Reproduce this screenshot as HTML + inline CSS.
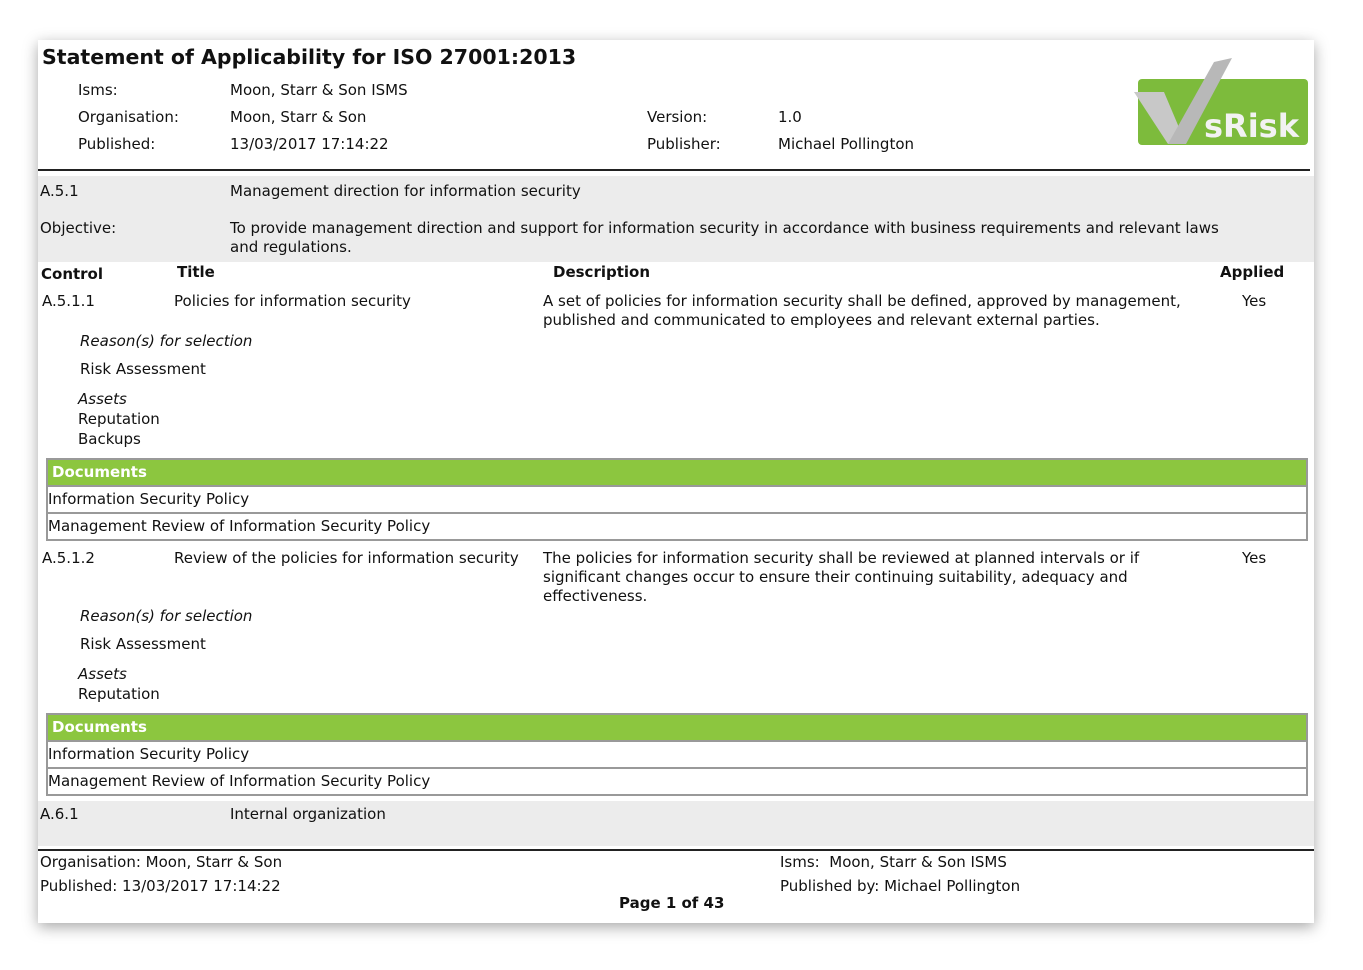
<!DOCTYPE html>
<html><head><meta charset="utf-8"><style>
body{margin:0;background:#fff;width:1363px;height:970px;position:relative;overflow:hidden;font-family:"DejaVu Sans","Liberation Sans",sans-serif;font-size:15px;color:#111}
.pg{position:absolute;left:38px;top:40px;width:1276px;height:883px;background:#fff;box-shadow:0 4px 14px rgba(0,0,0,.35)}
.t{position:absolute;white-space:nowrap}
.b{font-weight:bold}
.i{font-style:italic}
.gray{position:absolute;background:#ececec;left:38px;width:1276px}
.doc{position:absolute;left:46px;width:1262px;border:2px solid #999;box-sizing:border-box;background:#fff}
.dh{background:#8cc63f;color:#fff;font-weight:bold;height:25px;line-height:25px;padding-left:4px}
.dr{height:27px;line-height:24px;border-top:2px solid #999;box-sizing:border-box}
</style></head><body>
<div class="pg"></div>
<div class="t b" style="left:42px;top:45px;font-size:20.5px">Statement of Applicability for ISO 27001:2013</div>
<div class="t" style="left:78px;top:81px">Isms:</div>
<div class="t" style="left:230px;top:81px">Moon, Starr &amp; Son ISMS</div>
<div class="t" style="left:78px;top:108px">Organisation:</div>
<div class="t" style="left:230px;top:108px">Moon, Starr &amp; Son</div>
<div class="t" style="left:647px;top:108px">Version:</div>
<div class="t" style="left:778px;top:108px">1.0</div>
<div class="t" style="left:78px;top:135px">Published:</div>
<div class="t" style="left:230px;top:135px">13/03/2017 17:14:22</div>
<div class="t" style="left:647px;top:135px">Publisher:</div>
<div class="t" style="left:778px;top:135px">Michael Pollington</div>
<svg style="position:absolute;left:1134px;top:56px" width="176" height="92" viewBox="0 0 176 92">
<rect x="4" y="23" width="170" height="66" rx="4" fill="#7dbb3c"/>
<polygon points="0,36 30,36 52,88 34,88" fill="#c8c8c8"/>
<polygon points="34,88 52,88 98,2 80,6" fill="#b8b8b8"/>
<text x="70" y="81" font-family="DejaVu Sans,sans-serif" font-weight="bold" font-size="32" fill="#f2f2f2">sRisk</text>
</svg>
<div style="position:absolute;left:38px;top:169px;width:1272px;height:2px;background:#222"></div>
<div class="gray" style="top:176px;height:86px"></div>
<div class="t" style="left:40px;top:182px">A.5.1</div>
<div class="t" style="left:230px;top:182px">Management direction for information security</div>
<div class="t" style="left:40px;top:219px">Objective:</div>
<div class="t" style="left:230px;top:219px;line-height:19px">To provide management direction and support for information security in accordance with business requirements and relevant laws<br>and regulations.</div>
<div class="t b" style="left:41px;top:265px">Control</div>
<div class="t b" style="left:177px;top:263px">Title</div>
<div class="t b" style="left:553px;top:263px">Description</div>
<div class="t b" style="left:1220px;top:263px">Applied</div>
<div class="t" style="left:42px;top:292px">A.5.1.1</div>
<div class="t" style="left:174px;top:292px">Policies for information security</div>
<div class="t" style="left:543px;top:292px;line-height:19px">A set of policies for information security shall be defined, approved by management,<br>published and communicated to employees and relevant external parties.</div>
<div class="t" style="left:1242px;top:292px">Yes</div>
<div class="t i" style="left:80px;top:332px">Reason(s) for selection</div>
<div class="t" style="left:80px;top:360px">Risk Assessment</div>
<div class="t i" style="left:78px;top:390px">Assets</div>
<div class="t" style="left:78px;top:410px">Reputation</div>
<div class="t" style="left:78px;top:430px">Backups</div>
<div class="doc" style="top:458px"><div class="dh">Documents</div><div class="dr">Information Security Policy</div><div class="dr">Management Review of Information Security Policy</div></div>
<div class="t" style="left:42px;top:549px">A.5.1.2</div>
<div class="t" style="left:174px;top:549px">Review of the policies for information security</div>
<div class="t" style="left:543px;top:549px;line-height:19px">The policies for information security shall be reviewed at planned intervals or if<br>significant changes occur to ensure their continuing suitability, adequacy and<br>effectiveness.</div>
<div class="t" style="left:1242px;top:549px">Yes</div>
<div class="t i" style="left:80px;top:607px">Reason(s) for selection</div>
<div class="t" style="left:80px;top:635px">Risk Assessment</div>
<div class="t i" style="left:78px;top:665px">Assets</div>
<div class="t" style="left:78px;top:685px">Reputation</div>
<div class="doc" style="top:713px"><div class="dh">Documents</div><div class="dr">Information Security Policy</div><div class="dr">Management Review of Information Security Policy</div></div>
<div class="gray" style="top:801px;height:45px"></div>
<div class="t" style="left:40px;top:805px">A.6.1</div>
<div class="t" style="left:230px;top:805px">Internal organization</div>
<div style="position:absolute;left:38px;top:849px;width:1276px;height:2px;background:#222"></div>
<div class="t" style="left:40px;top:853px">Organisation: Moon, Starr &amp; Son</div>
<div class="t" style="left:40px;top:877px">Published: 13/03/2017 17:14:22</div>
<div class="t" style="left:780px;top:853px">Isms:&nbsp; Moon, Starr &amp; Son ISMS</div>
<div class="t" style="left:780px;top:877px">Published by: Michael Pollington</div>
<div class="t b" style="left:619px;top:894px">Page 1 of 43</div>
</body></html>
